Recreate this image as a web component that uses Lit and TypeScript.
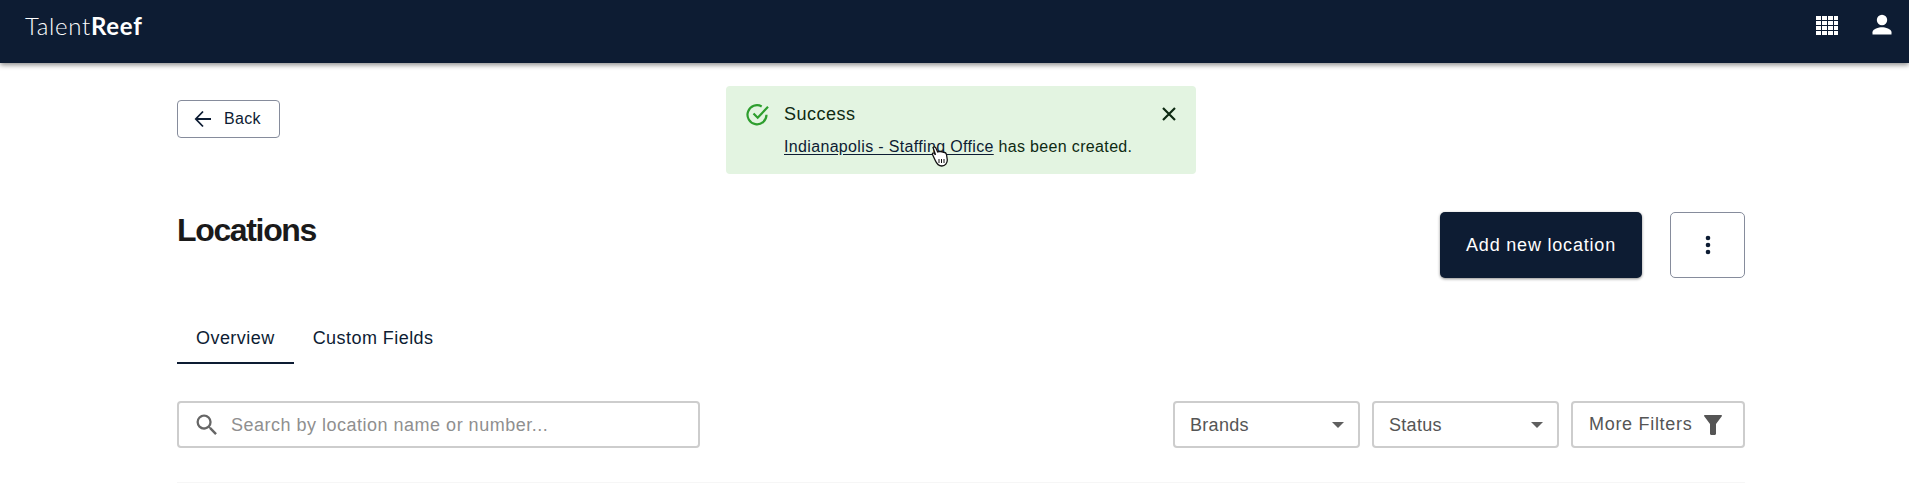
import { LitElement, html, css } from "lit";
import { customElement } from "lit/decorators.js";

@customElement("app-root")
export class AppRoot extends LitElement {
  static styles = css`
    :host { display: block; font-family: "Liberation Sans", Arial, sans-serif; color: #0d1c33; background: #fff; height: 485px; overflow: hidden; position: relative; }
    * { box-sizing: border-box; }
    .top { height: 63px; background: #0d1c33; box-shadow: 0 2px 5px rgba(0,0,0,.45); display: flex; align-items: flex-start; justify-content: space-between; padding: 0 16px 0 25px; position: relative; }
    .logo { font-family: Lato, sans-serif; font-size: 24px; line-height: 26px; margin-top: 13px; color: #fff; font-weight: 300; letter-spacing: .7px; }
    .logo b { font-weight: 700; }
    .top-icons { display: flex; align-items: center; gap: 32px; margin-top: 14px; }
    .top-icons svg { display: block; }
    .main { padding: 37px 164px 0 177px; display: flex; flex-direction: column; }
    .back { width: 103px; height: 38px; border: 1px solid #868c9c; border-radius: 4px; display: flex; align-items: center; gap: 11px; padding-left: 15px; font-size: 16px; letter-spacing: .35px; background: #fff; }
    .title-row { display: flex; justify-content: space-between; align-items: flex-start; margin-top: 74px; }
    h1 { margin: -2px 0 0; font-size: 32px; line-height: 40px; font-weight: 700; letter-spacing: -1.35px; color: #1a1a1a; }
    .actions { display: flex; gap: 28px; }
    .primary { width: 202px; height: 66px; background: #0d1c33; color: #fff; border-radius: 5px; box-shadow: 0 1px 3px rgba(0,0,0,.45); display: flex; align-items: center; justify-content: center; font-size: 18px; letter-spacing: .8px; }
    .kebab { width: 75px; height: 66px; border: 1px solid #868c9c; border-radius: 5px; display: flex; align-items: center; justify-content: center; }
    .tabs { display: flex; margin-top: 35px; }
    .tab { height: 51px; padding: 14px 19px 0; font-size: 18px; line-height: 22px; letter-spacing: .45px; }
    .tab.on { border-bottom: 2px solid #0d1c33; }
    .controls { display: flex; justify-content: space-between; margin-top: 37px; height: 47px; }
    .search { width: 523px; border: 2px solid #cdcdcd; border-radius: 4px; display: flex; align-items: center; padding: 0 0 0 14px; gap: 10px; font-size: 18px; color: #8f8f8f; letter-spacing: .5px; }
    .search span { padding-top: 2px; }
    .filters { display: flex; gap: 12px; }
    .filter { border: 2px solid #cdcdcd; border-radius: 4px; display: flex; align-items: center; justify-content: space-between; font-size: 18px; color: #555; padding: 0 14px 0 15px; width: 187px; letter-spacing: .3px; }
    .filter > span:first-child { padding-top: 2px; }
    .caret { width: 0; height: 0; border-left: 6px solid transparent; border-right: 6px solid transparent; border-top: 6px solid #5f5f5f; }
    .filter.more { width: 174px; padding: 0 21px 0 16px; letter-spacing: .7px; }
    .filter.more > span:first-child { padding-top: 0; }
    .rule { height: 1px; background: #f6f6f6; margin-top: 34px; }
    .alert { position: absolute; left: 726px; top: 86px; width: 470px; height: 88px; background: #e3f4e1; border-radius: 4px; color: #0e2a12; }
    .alert-grid { display: grid; grid-template-columns: 39px 1fr 24px; padding: 16px 15px 0 19px; }
    .alert-title { font-size: 18px; line-height: 25px; letter-spacing: .5px; }
    .alert-msg { grid-column: 2 / 4; font-size: 16px; line-height: 22px; letter-spacing: .34px; margin-top: 8px; }
    .alert-msg u { color: #0d1c33; text-underline-offset: 2px; }
    .cursor { position: absolute; left: 930px; top: 145px; }
  `;

  render() {
    return html`
      <div class="top">
        <div class="logo">Talent<b>Reef</b></div>
        <div class="top-icons">
          <svg width="24" height="20" viewBox="0 0 24 20" fill="#fff">
            <path d="M1 1h5v4H1zM7 1h5v4H7zM13 1h5v4h-5zM19 1h4v4h-4zM1 6h5v4H1zM7 6h5v4H7zM13 6h5v4h-5zM19 6h4v4h-4zM1 11h5v4H1zM7 11h5v4H7zM13 11h5v4h-5zM19 11h4v4h-4zM1 16h5v4H1zM7 16h5v4H7zM13 16h5v4h-5zM19 16h4v4h-4z"/>
          </svg>
          <svg width="22" height="22" viewBox="0 0 22 22" fill="#fff">
            <circle cx="11" cy="6" r="5.2"/>
            <path d="M1.5 20.5v-2.2c0-3.4 6.3-5 9.5-5s9.500 1.600 9.500 5v2.200z"/>
          </svg>
        </div>
      </div>

      <div class="main">
        <div class="back">
          <svg width="20" height="20" viewBox="0 0 20 20" fill="none" stroke="#0d1c33" stroke-width="1.8"><path d="M18 10H3M10 2.500 2.800 10 10 17.500"/></svg>
          <span>Back</span>
        </div>
        <div class="title-row">
          <h1>Locations</h1>
          <div class="actions">
            <div class="primary">Add new location</div>
            <div class="kebab">
              <svg width="8" height="20" viewBox="0 0 8 20" fill="#0d1c33"><circle cx="4" cy="3" r="2.300"/><circle cx="4" cy="10" r="2.300"/><circle cx="4" cy="17" r="2.300"/></svg>
            </div>
          </div>
        </div>
        <div class="tabs">
          <div class="tab on">Overview</div>
          <div class="tab">Custom Fields</div>
        </div>
        <div class="controls">
          <div class="search">
            <svg width="28" height="28" viewBox="0 0 24 24" fill="#666"><path d="M15.500 14h-.79l-.28-.27A6.471 6.471 0 0 0 16 9.500 6.500 6.500 0 1 0 9.500 16c1.610 0 3.090-.59 4.230-1.570l.27.28v.79l5 4.990L20.490 19l-4.990-5zm-6 0C7.010 14 5 11.990 5 9.500S7.010 5 9.500 5 14 7.010 14 9.500 11.990 14 9.500 14z"/></svg>
            <span>Search by location name or number...</span>
          </div>
          <div class="filters">
            <div class="filter"><span>Brands</span><span class="caret"></span></div>
            <div class="filter"><span>Status</span><span class="caret"></span></div>
            <div class="filter more"><span>More Filters</span>
              <svg width="18" height="20" viewBox="0 0 18 20" fill="#555"><path d="M.8 0h16.400c.7 0 1 .7.6 1.200L12 9v9.800c0 .7-.5 1.200-1.200 1.200H7.200c-.7 0-1.200-.5-1.200-1.200V9L.2 1.200C-.2.700.1 0 .8 0z"/></svg>
            </div>
          </div>
        </div>
        <div class="rule"></div>
      </div>

      <div class="alert">
        <div class="alert-grid">
          <svg width="26" height="26" viewBox="0 0 26 26" fill="none" stroke="#2e9e2e" stroke-width="2.200"><path d="M21.500 12.800a9.500 9.500 0 1 1-4.800-8.300"/><path d="M8.500 11.500l4.200 4.200L23 4.800"/></svg>
          <div class="alert-title">Success</div>
          <svg width="24" height="24" viewBox="0 0 24 24" fill="none" stroke="#0e2a12" stroke-width="2.200"><path d="M6 6l12 12M18 6 6 18"/></svg>
          <div class="alert-msg"><u>Indianapolis - Staffing Office</u> has been created.</div>
        </div>
      </div>
      <svg class="cursor" width="20" height="24" viewBox="0 0 20 24"><path d="M3 2.500c1-1 2.500-.5 3 .8l1.600 3.600c1-.6 4.400-.6 5.600.4 1.600-.3 3 .8 3.300 2.200l.8 5.500c0 3-2 6-5.500 6-3.500 0-5-2-6.500-5.500L2.500 9.500C2 8.500 3 7.500 4 8l1.500 1.800z" fill="#fff" stroke="#111" stroke-width="1.300"/><path d="M9 14v4M11.500 14v4M14 14v4" stroke="#111" stroke-width="1"/></svg>
    `;
  }
}
